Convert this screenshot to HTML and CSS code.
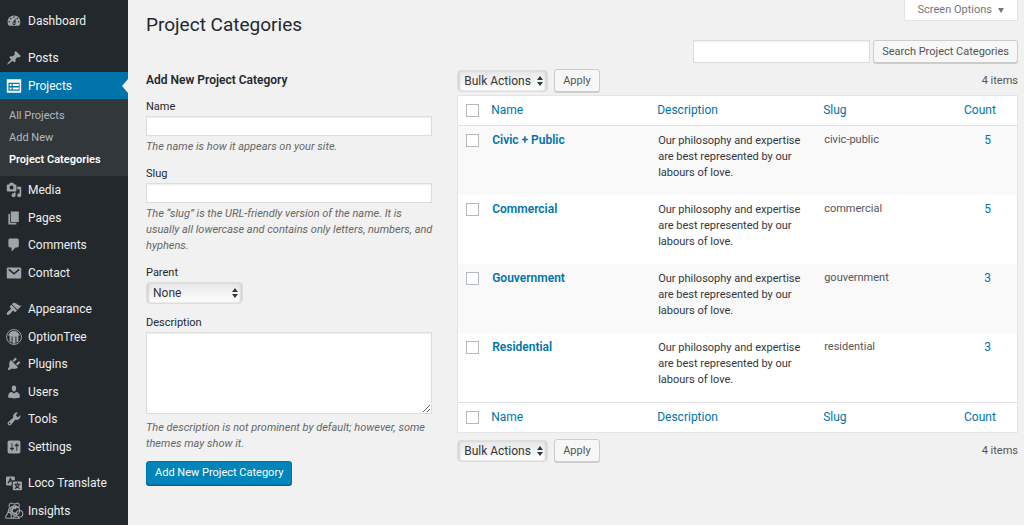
FILE: index.html
```html
<!DOCTYPE html>
<html lang="en">
<head>
<meta charset="utf-8">
<meta name="viewport" content="width=device-width, initial-scale=1">
<title>Project Categories</title>
<link rel="stylesheet" href="styles.css">
</head>
<body>
<div class="admin">
  <nav class="sidebar" aria-label="Main menu">
    <ul class="menu">
      <li><a class="menu-link" href="#"><svg class="icon" viewBox="0 0 20 20" aria-hidden="true"><path d="M3.76 16h12.48c1.1-1.37 1.76-3.11 1.76-5 0-4.42-3.58-8-8-8s-8 3.58-8 8c0 1.89.66 3.63 1.76 5zM10 4c.55 0 1 .45 1 1s-.45 1-1 1-1-.45-1-1 .45-1 1-1zM6 6c.55 0 1 .45 1 1s-.45 1-1 1-1-.45-1-1 .45-1 1-1zm8 0c.55 0 1 .45 1 1s-.45 1-1 1-1-.45-1-1 .45-1 1-1zm-5.37 5.55L12 7v6c0 1.1-.9 2-2 2s-2-.9-2-2c0-.57.24-1.08.63-1.45zM4 10c.55 0 1 .45 1 1s-.45 1-1 1-1-.45-1-1 .45-1 1-1zm12 0c.55 0 1 .45 1 1s-.45 1-1 1-1-.45-1-1 .45-1 1-1zm-5 3c0-.55-.45-1-1-1s-1 .45-1 1 .45 1 1 1 1-.45 1-1z"/></svg>Dashboard</a></li>
    </ul>
    <ul class="menu">
      <li><a class="menu-link" href="#"><svg class="icon" viewBox="0 0 20 20" aria-hidden="true"><path d="M10.44 3.02l1.82-1.82 6.36 6.35-1.83 1.82c-1.05-.68-2.48-.57-3.41.36l-.75.75c-.92.93-1.04 2.35-.35 3.41l-1.83 1.82-2.41-2.41-2.8 2.79c-.42.42-3.38 2.71-3.8 2.29s1.86-3.39 2.28-3.81l2.79-2.79L4.1 9.36l1.83-1.82c1.05.69 2.48.57 3.4-.36l.75-.75c.93-.92 1.05-2.35.36-3.41z"/></svg>Posts</a></li>
      <li><a class="menu-link current" href="#"><svg class="icon" viewBox="0 0 20 20" aria-hidden="true"><path fill-rule="evenodd" d="M1 1.500h18v17H1zM3 6v10h14V6zM4.500 7.500h2.500v2.500H4.500zM8.500 7.500H16v2.500H8.500zM4.500 12h2.500v2.500H4.500zM8.500 12H16v2.500H8.500z"/></svg>Projects</a>
        <ul class="submenu">
          <li><a href="#">All Projects</a></li>
          <li><a href="#">Add New</a></li>
          <li><a class="active" href="#" aria-current="page">Project Categories</a></li>
        </ul>
      </li>
    </ul>
    <ul class="menu joined">
      <li><a class="menu-link" href="#"><svg class="icon" viewBox="0 0 20 20" aria-hidden="true"><path d="M13 11V4c0-.55-.45-1-1-1h-1.670L9 1H5L3.670 3H2c-.55 0-1 .45-1 1v7c0 .55.45 1 1 1h10c.55 0 1-.45 1-1zM7 4.500c1.380 0 2.500 1.120 2.500 2.500S8.380 9.500 7 9.500 4.500 8.380 4.500 7 5.620 4.500 7 4.500zM14 6h5v10.500c0 1.380-1.120 2.500-2.500 2.500S14 17.880 14 16.500s1.120-2.500 2.500-2.500c.17 0 .34.02.5.05V9h-3V6zm-4 8.050V13h2v3.500c0 1.380-1.120 2.500-2.500 2.500S7 17.880 7 16.500 8.120 14 9.500 14c.17 0 .34.02.5.05z"/></svg>Media</a></li>
      <li><a class="menu-link" href="#"><svg class="icon" viewBox="0 0 20 20" aria-hidden="true"><path d="M6 15V2h10v13H6zm-1 1h8v2H3V5h2v11z"/></svg>Pages</a></li>
      <li><a class="menu-link" href="#"><svg class="icon" viewBox="0 0 20 20" aria-hidden="true"><path d="M5 2h9c1.100 0 2 .9 2 2v7c0 1.100-.9 2-2 2h-2l-5 5v-5H5c-1.100 0-2-.9-2-2V4c0-1.100.9-2 2-2z"/></svg>Comments</a></li>
      <li><a class="menu-link" href="#"><svg class="icon" viewBox="0 0 20 20" aria-hidden="true"><rect x="1" y="3" width="18" height="14" rx="1.500"/><path d="M3.500 5.500l6.500 5.500 6.500-5.500" fill="none" stroke="#23282d" stroke-width="2"/></svg>Contact</a></li>
    </ul>
    <ul class="menu">
      <li><a class="menu-link" href="#"><svg class="icon" viewBox="0 0 20 20" aria-hidden="true"><path d="M14.48 11.06L7.41 3.99l1.5-1.5c.5-.56 2.3-.47 3.51.32 1.21.8 1.43 1.28 2.91 2.1 1.18.64 2.45 1.26 4.45.85zm-.71.71L6.7 4.7 4.93 6.47c-.39.39-.39 1.02 0 1.41l1.06 1.06c.39.39.39 1.03 0 1.42-.6.6-1.43 1.11-2.21 1.69-.35.26-.7.53-1.01.84C1.43 14.23.4 16.08 1.4 17.07c.99 1 2.84-.03 4.18-1.36.31-.31.58-.66.85-1.02.57-.78 1.08-1.61 1.69-2.21.39-.39 1.02-.39 1.41 0l1.06 1.06c.39.39 1.02.39 1.41 0z"/></svg>Appearance</a></li>
      <li><a class="menu-link" href="#"><svg class="icon" viewBox="0 0 20 20" aria-hidden="true"><circle cx="10" cy="10" r="9.300" fill="none" stroke="currentColor" stroke-width="1.200"/><path d="M8.200 18V9.500H7V17a7.600 7.600 0 0 1-2.500-1.800V8.500H2.800C3.800 5 6.500 2.600 10 2.600S16.200 5 17.200 8.500h-1.700v6.700A7.600 7.600 0 0 1 13 17V9.500h-1.200V18z"/></svg>OptionTree</a></li>
      <li><a class="menu-link" href="#"><svg class="icon" viewBox="0 0 20 20" aria-hidden="true"><path d="M13.11 4.36L9.87 7.6 8 5.73l3.24-3.24c.35-.34 1.05-.2 1.56.32.52.51.66 1.21.31 1.55zm-8 1.77l.91-1.12 9.01 9.01-1.19.84c-.71.71-2.63 1.16-3.82 1.16H6.14L4.9 17.26c-.59.59-1.54.59-2.12 0-.59-.58-.59-1.53 0-2.12l1.24-1.24v-3.88c0-1.13.4-3.19 1.09-3.89zm7.26 3.97l3.24-3.24c.34-.35 1.04-.21 1.55.31.52.51.66 1.21.31 1.55l-3.24 3.25z"/></svg>Plugins</a></li>
      <li><a class="menu-link" href="#"><svg class="icon" viewBox="0 0 20 20" aria-hidden="true"><path d="M10 9.25c-2.27 0-2.73-3.44-2.73-3.44C7 4.02 7.82 2 9.97 2c2.16 0 2.98 2.02 2.71 3.81 0 0-.41 3.44-2.68 3.44zm0 2.57L12.72 10c2.39 0 4.52 2.33 4.52 4.53v2.49s-3.65 1.13-7.24 1.13c-3.65 0-7.24-1.13-7.24-1.13v-2.49c0-2.25 1.94-4.48 4.47-4.48z"/></svg>Users</a></li>
      <li><a class="menu-link" href="#"><svg class="icon" viewBox="0 0 20 20" aria-hidden="true"><path d="M16.68 9.77c-1.34 1.34-3.3 1.67-4.95.99l-5.41 6.52c-.99.99-2.59.99-3.58 0s-.99-2.59 0-3.57l6.52-5.42c-.68-1.65-.35-3.61.99-4.95 1.28-1.28 3.12-1.62 4.72-1.06l-2.89 2.89 2.82 2.82 2.86-2.87c.53 1.58.18 3.39-1.08 4.65zM3.81 16.21c.4.39 1.04.39 1.43 0 .4-.4.4-1.04 0-1.43-.39-.4-1.03-.4-1.43 0-.39.39-.39 1.03 0 1.43z"/></svg>Tools</a></li>
      <li><a class="menu-link" href="#"><svg class="icon" viewBox="0 0 20 20" aria-hidden="true"><path d="M18 16V4c0-1.100-.9-2-2-2H4c-1.100 0-2 .9-2 2v12c0 1.100.9 2 2 2h12c1.100 0 2-.9 2-2zM8 11h1c.55 0 1 .45 1 1s-.45 1-1 1H8v1.500c0 .28-.22.5-.5.5s-.5-.22-.5-.5V13H6c-.55 0-1-.45-1-1s.45-1 1-1h1V5.500c0-.28.22-.5.5-.5s.5.22.5.5V11zm5-2h-1c-.55 0-1-.45-1-1s.45-1 1-1h1V5.500c0-.28.22-.5.5-.5s.5.22.5.5V7h1c.55 0 1 .45 1 1s-.45 1-1 1h-1v5.500c0 .28-.22.5-.5.5s-.5-.22-.5-.5V9z"/></svg>Settings</a></li>
    </ul>
    <ul class="menu">
      <li><a class="menu-link" href="#"><svg class="icon" viewBox="0 0 20 20" aria-hidden="true"><path d="M11 6.500V3.500c0-.8-.7-1.500-1.500-1.500H1.500C.7 2 0 2.700 0 3.500v8c0 .8.7 1.500 1.500 1.500H7V8c0-.8.7-1.500 1.500-1.500z"/><path d="M2.500 10.500l3-6 1.500 3M4 8h2.500" fill="none" stroke="#23282d" stroke-width="1.500"/><rect x="8.500" y="8" width="11.500" height="11" rx="1.500"/><path d="M10.500 11.500h7.500M14.200 9.500v2M16.500 11.500c-.5 2.500-2.500 4.500-5.500 5.500M12 12c.5 2.500 2.500 4 5.500 5" fill="none" stroke="#23282d" stroke-width="1.300"/></svg>Loco Translate</a></li>
      <li><a class="menu-link" href="#"><svg class="icon" viewBox="0 0 20 20" aria-hidden="true"><g fill="none" stroke="currentColor" stroke-width="1.300"><path d="M4.500 6C3 3 4.500 0 6.500 0S8 1.200 10.500 1.200 13-.2 15 .2s2 3.300.8 5.800"/><path d="M4.500 6C2.500 9 3 12 1 14.500S-1 19 1 19h16M3 10.500L6.500 14v5"/><circle cx="11" cy="9.500" r="6"/><path d="M13 7a3.500 3.500 0 1 0 0 5.500" stroke-width="2.400"/><circle cx="17" cy="13.500" r="4"/><path d="M5.500 6c3-2.500 7-2.500 10 0M16 17.500V20M9 19c0-1.500 1.500-2 4-2"/></g></svg>Insights</a></li>
    </ul>
  </nav>

  <main class="content">
    <header class="page-head">
      <h1>Project Categories</h1>
      <button class="screen-options" type="button">Screen Options <svg class="caret" viewBox="0 0 6 5" aria-hidden="true"><path d="M0 0h6L3 5z"/></svg></button>
    </header>

    <form class="search">
      <input class="field" type="search" aria-label="Search Project Categories">
      <button class="button" type="button">Search Project Categories</button>
    </form>

    <div class="columns">
      <form class="add-form">
        <h2>Add New Project Category</h2>
        <div class="form-row">
          <label for="tag-name">Name</label>
          <input class="field" id="tag-name" type="text">
          <p>The name is how it appears on your site.</p>
        </div>
        <div class="form-row">
          <label for="tag-slug">Slug</label>
          <input class="field" id="tag-slug" type="text">
          <p>The “slug” is the URL-friendly version of the name. It is usually all lowercase and contains only letters, numbers, and hyphens.</p>
        </div>
        <div class="form-row">
          <label for="tag-parent">Parent</label>
          <span class="select parent"><select id="tag-parent"><option>None</option></select><svg viewBox="0 0 6 10" aria-hidden="true"><path d="M0 4l3-4 3 4zM0 6h6l-3 4z"/></svg></span>
        </div>
        <div class="form-row">
          <label for="tag-description">Description</label>
          <textarea class="field" id="tag-description"></textarea>
          <p>The description is not prominent by default; however, some themes may show it.</p>
        </div>
        <button class="button primary" type="button">Add New Project Category</button>
      </form>

      <section class="list" aria-label="Project categories">
        <div class="table-nav">
          <span class="select"><select aria-label="Bulk actions"><option>Bulk Actions</option></select><svg viewBox="0 0 6 10" aria-hidden="true"><path d="M0 4l3-4 3 4zM0 6h6l-3 4z"/></svg></span>
          <button class="button" type="button">Apply</button>
          <span class="total">4 items</span>
        </div>
        <table>
          <colgroup><col class="col-check"><col class="col-text"><col class="col-text"><col><col class="col-count"></colgroup>
          <thead>
            <tr><td><input type="checkbox" aria-label="Select all"></td><th scope="col"><a href="#">Name</a></th><th scope="col"><a href="#">Description</a></th><th scope="col"><a href="#">Slug</a></th><th scope="col"><a href="#">Count</a></th></tr>
          </thead>
          <tbody>
            <tr><td><input type="checkbox" aria-label="Select Civic + Public"></td><td class="name"><a href="#">Civic + Public</a></td><td class="description">Our philosophy and expertise are best represented by our labours of love.</td><td>civic-public</td><td class="count"><a href="#">5</a></td></tr>
            <tr><td><input type="checkbox" aria-label="Select Commercial"></td><td class="name"><a href="#">Commercial</a></td><td class="description">Our philosophy and expertise are best represented by our labours of love.</td><td>commercial</td><td class="count"><a href="#">5</a></td></tr>
            <tr><td><input type="checkbox" aria-label="Select Gouvernment"></td><td class="name"><a href="#">Gouvernment</a></td><td class="description">Our philosophy and expertise are best represented by our labours of love.</td><td>gouvernment</td><td class="count"><a href="#">3</a></td></tr>
            <tr><td><input type="checkbox" aria-label="Select Residential"></td><td class="name"><a href="#">Residential</a></td><td class="description">Our philosophy and expertise are best represented by our labours of love.</td><td>residential</td><td class="count"><a href="#">3</a></td></tr>
          </tbody>
          <tfoot>
            <tr><td><input type="checkbox" aria-label="Select all"></td><th scope="col"><a href="#">Name</a></th><th scope="col"><a href="#">Description</a></th><th scope="col"><a href="#">Slug</a></th><th scope="col"><a href="#">Count</a></th></tr>
          </tfoot>
        </table>
        <div class="table-nav bottom">
          <span class="select"><select aria-label="Bulk actions"><option>Bulk Actions</option></select><svg viewBox="0 0 6 10" aria-hidden="true"><path d="M0 4l3-4 3 4zM0 6h6l-3 4z"/></svg></span>
          <button class="button" type="button">Apply</button>
          <span class="total">4 items</span>
        </div>
      </section>
    </div>
  </main>
</div>
</body>
</html>
```
FILE: styles.css
```css
* { box-sizing: border-box; }

body {
  margin: 0;
  background: #f1f1f1;
  color: #444;
  font: 11px/16px Roboto, "Liberation Sans", sans-serif;
}

a { color: #0073aa; text-decoration: none; }
h1, h2, p, ul { margin: 0; padding: 0; }
ul { list-style: none; }
button, input, select, textarea { margin: 0; font: inherit; color: inherit; }

.admin { display: flex; min-height: 100vh; }

/* Sidebar */
.sidebar {
  flex: none;
  width: 128px;
  padding-top: 7px;
  background: #23282d;
}
.menu + .menu { margin-top: 9px; }
.menu + .menu.joined { margin-top: 0; }
.menu-link {
  display: flex;
  align-items: center;
  gap: 6px;
  height: 28px;
  padding-left: 6px;
  color: #eee;
  font-size: 12px;
}
.menu > li:nth-child(even) > .menu-link { height: 27px; }
.icon {
  flex: none;
  width: 16px;
  height: 16px;
  overflow: visible;
  fill: currentColor;
  color: #a0a5aa;
}
.current { position: relative; background: #0073aa; color: #fff; }
.current .icon { color: #fff; }
.current::after {
  content: "";
  position: absolute;
  top: 50%;
  right: 0;
  margin-top: -7px;
  border: 7px solid transparent;
  border-left: 0;
  border-right: 6px solid #f1f1f1;
}
.submenu { padding: 6px 0 5px; background: #32373c; }
.submenu a {
  display: block;
  padding-left: 9px;
  color: #b4b9be;
  line-height: 22px;
}
.submenu .active { color: #fff; font-weight: 600; }

/* Page header */
.content { flex: 1; min-width: 0; padding: 0 6px 20px 18px; }
.page-head {
  display: flex;
  justify-content: space-between;
  align-items: flex-start;
  height: 40px;
}
h1 {
  padding-top: 13px;
  color: #23282d;
  font-size: 19px;
  font-weight: 400;
  line-height: 24px;
}
.screen-options {
  display: flex;
  align-items: center;
  gap: 6px;
  height: 21px;
  padding: 0 13px;
  border: 1px solid #e5e5e5;
  border-top: 0;
  background: #fff;
  color: #72777c;
}
.caret { width: 6px; height: 5px; fill: currentColor; }

/* Controls */
.field {
  border: 1px solid #ddd;
  background: #fff;
  box-shadow: inset 0 1px 2px rgba(0, 0, 0, .07);
}
.button {
  height: 23px;
  padding: 0 8px;
  border: 1px solid #ccc;
  border-radius: 3px;
  background: #f7f7f7;
  box-shadow: 0 1px 0 #ccc;
  color: #555;
  white-space: nowrap;
}
.primary {
  height: 24px;
  border-color: #0073aa;
  background: #0085ba;
  box-shadow: 0 1px 0 #006799;
  color: #fff;
}
.select { position: relative; display: inline-block; width: 91px; }
.select.parent { display: block; width: 97px; }
.select select {
  display: block;
  width: 100%;
  height: 22px;
  padding: 0 6px;
  border: 1px solid #ddd;
  border-radius: 4px;
  appearance: none;
  background: linear-gradient(#e7e7e7, #fff);
  box-shadow: inset 2px 0 2px #d5d5d5, inset -2px 0 2px #d5d5d5;
  color: #32373c;
  font-size: 12px;
}
.select svg {
  position: absolute;
  top: 6px;
  right: 5px;
  width: 6px;
  height: 10px;
  fill: #32373c;
  pointer-events: none;
}

.search { display: flex; justify-content: flex-end; gap: 3px; }
.search .field { width: 177px; height: 23px; }

.columns { display: flex; margin-top: 6px; }

/* Add form */
.add-form { width: 35%; padding-right: 4px; }
h2 {
  margin-top: 3px;
  color: #23282d;
  font-size: 12px;
  font-weight: 600;
  line-height: 16px;
}
.form-row { margin-top: 11px; }
.form-row label {
  display: block;
  margin-bottom: 1px;
  color: #23282d;
}
.form-row .field { display: block; width: calc(100% - 15px); height: 20px; }
.form-row textarea.field { height: 82px; margin-bottom: 6px; resize: vertical; }
.form-row p { margin-top: 3px; padding-right: 11px; color: #666; font-style: italic; }
.add-form .primary { margin-top: 9px; }

/* Category list */
.list { flex: 1; min-width: 0; padding-left: 6px; }
.table-nav { display: flex; align-items: center; gap: 6px; }
.table-nav .total { margin-left: auto; color: #555; }
.table-nav.bottom { margin-top: 6px; }
table {
  width: 100%;
  margin-top: 3px;
  border: 1px solid #e5e5e5;
  border-spacing: 0;
  table-layout: fixed;
  background: #fff;
}
.col-check { width: 27px; }
.col-text { width: 166px; }
.col-count { width: 59px; }
th, td { padding: 6px 7px; text-align: left; vertical-align: top; color: #555; }
th { padding: 6px; font-size: 12px; font-weight: 400; }
thead th, thead td { border-bottom: 1px solid #e1e1e1; }
tfoot th, tfoot td { border-top: 1px solid #e1e1e1; }
tbody tr:nth-child(odd) { background: #f9f9f9; }
tbody tr { height: 69px; }
tbody .name { font-size: 12px; font-weight: 600; }
tbody .description { padding-top: 7px; color: #32373c; }
tbody .count { font-size: 12px; text-align: center; }
td:first-child { padding: 8px; }
input[type="checkbox"] {
  display: block;
  width: 13px;
  height: 13px;
  border: 1px solid #b4b9be;
  appearance: none;
  background: #fff;
}
```
